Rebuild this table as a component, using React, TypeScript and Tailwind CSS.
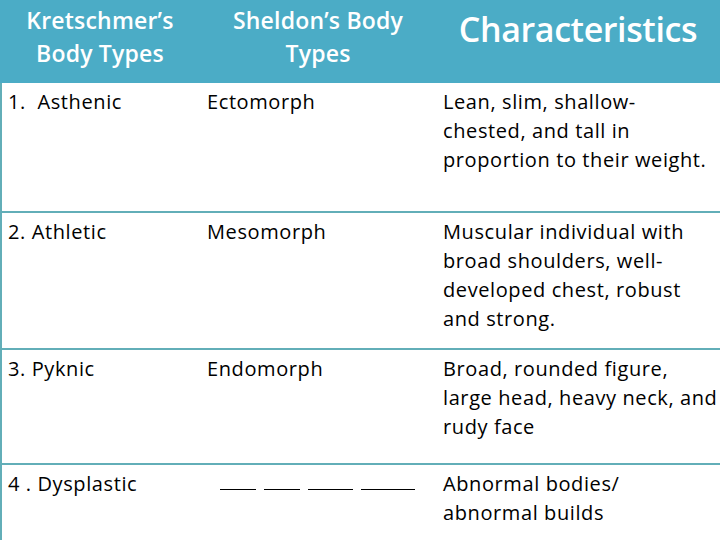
const rows = [
  { kretschmer: '1.\u00a0 Asthenic', sheldon: 'Ectomorph', traits: ['Lean, slim, shallow-', 'chested, and tall in', 'proportion to their weight.'], height: 'h-[128px]' },
  { kretschmer: '2. Athletic', sheldon: 'Mesomorph', traits: ['Muscular individual with', 'broad shoulders, well-', 'developed chest, robust', 'and strong.'], height: 'h-[137px]' },
  { kretschmer: '3. Pyknic', sheldon: 'Endomorph', traits: ['Broad, rounded figure,', 'large head, heavy neck, and', 'rudy face'], height: 'h-[115px]' },
  { kretschmer: '4 . Dysplastic', sheldon: null, traits: ['Abnormal bodies/', 'abnormal builds'], height: 'h-[77px]' },
];

function Blanks() {
  return (
    <div className="flex gap-[8px] pl-[13px] pt-[20px]">
      <span className="w-[36px] border-b border-black" />
      <span className="w-[36px] border-b border-black" />
      <span className="w-[45px] border-b border-black" />
      <span className="w-[54px] border-b border-black" />
    </div>
  );
}

export default function App() {
  return (
    <div className="w-[720px] h-[540px] overflow-hidden bg-white font-['Open_Sans',sans-serif] text-black">
      {/* Header */}
      <div className="grid grid-cols-[200px_236px_284px] h-[83px] bg-[#4bacc6] text-white font-semibold">
        <div className="text-center text-[23px] leading-[33px] pt-[4px] tracking-[0.2px]">
          Kretschmer’s<br />Body Types
        </div>
        <div className="text-center text-[23px] leading-[33px] pt-[4px] tracking-[0.2px]">
          Sheldon’s Body<br />Types
        </div>
        <div className="text-center text-[34px] leading-[44px] pt-[7px] tracking-[-0.4px]">
          Characteristics
        </div>
      </div>

      {/* Body rows */}
      <div className="border-l-2 border-[#62aeb8]">
        {rows.map((row, i) => (
          <div
            key={i}
            className={`grid grid-cols-[198px_236px_284px] ${row.height} ${i > 0 ? 'border-t-2 border-[#62aeb8]' : ''} text-[20px] leading-[29px] tracking-[0.6px]`}
          >
            <div className="pl-[6px] pt-[4px]">{row.kretschmer}</div>
            <div className="pl-[7px] pt-[4px]">{row.sheldon ?? <Blanks />}</div>
            <div className="pl-[7px] pt-[4px] whitespace-nowrap">
              {row.traits.map((t, j) => (
                <div key={j}>{t}</div>
              ))}
            </div>
          </div>
        ))}
      </div>
    </div>
  );
}
